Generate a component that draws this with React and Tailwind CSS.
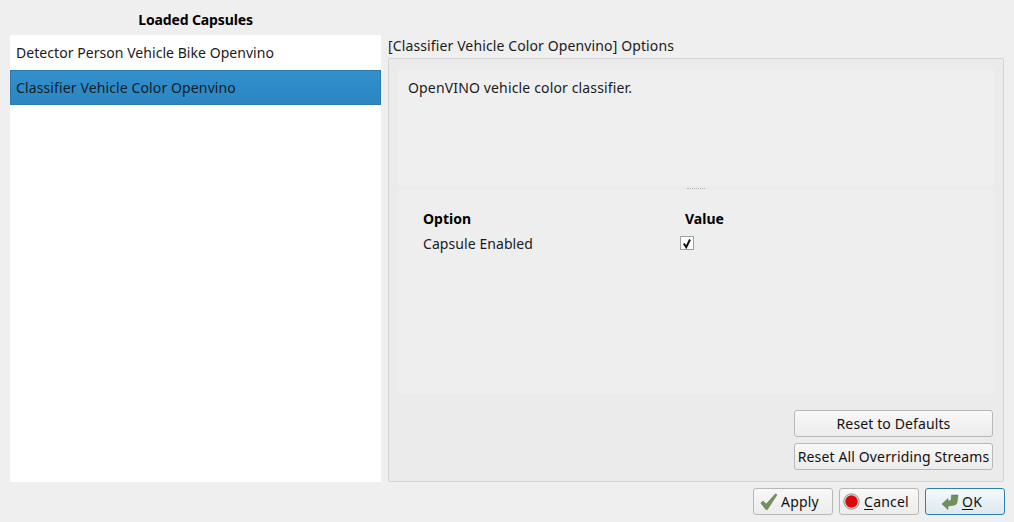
import React from 'react';

const font = { fontFamily: '"Noto Sans", sans-serif' };

const PushButton = ({ children, className = '' }) => (
  <div className={`flex items-center justify-center rounded-[3px] border bg-gradient-to-b text-[14px] leading-none text-[#111] ${className}`}>
    {children}
  </div>
);

const App = () => {
  return (
    <div style={font} className="flex h-[522px] w-[1014px] flex-col overflow-hidden bg-[#efefef] text-[14px] text-[#1a1a1a]">
      <div className="flex h-[482px] gap-[7px] pl-[10px] pr-[10px]">
        <div className="flex w-[371px] flex-col">
          <div className="flex h-[35px] items-center justify-center pt-[5px] text-[14px] font-bold leading-none tracking-[-0.13px] text-black">Loaded Capsules</div>
          <div className="flex-1 bg-white">
            <div className="flex h-[35px] items-center pl-[6px] tracking-[0.05px]">Detector Person Vehicle Bike Openvino</div>
            <div className="flex h-[35px] items-center border border-[#2a7ab0] bg-gradient-to-b from-[#3290cd] to-[#2c86c0] pl-[5px] tracking-[0.12px] text-[#10202c]">Classifier Vehicle Color Openvino</div>
          </div>
        </div>
        <div className="flex w-[616px] flex-col">
          <div className="flex h-[58px] items-end pb-[2px] leading-[20px] tracking-[0.12px]">[Classifier Vehicle Color Openvino] Options</div>
          <div className="flex flex-1 flex-col rounded-[2px] border-[1.5px] border-[#d4d4d4] bg-[#ebebeb] px-[9px] pb-[7px] pt-[10px]">
            <div className="h-[117px] rounded-[2px] bg-[#efefef] px-[10px] pt-[9px] leading-[20px] tracking-[0.15px]">OpenVINO vehicle color classifier.</div>
            <div className="flex h-[4px] items-center justify-center">
              <div className="w-[18px] border-t border-dotted border-[#b4b4b4]"></div>
            </div>
            <div className="h-[204px] rounded-[2px] bg-[#eeeeee] pl-[25px] pt-[19px]">
              <div className="flex h-[20px] items-center font-bold leading-none text-black">
                <div className="w-[262px]">Option</div>
                <div>Value</div>
              </div>
              <div className="mt-[4px] flex h-[20px] items-center leading-none">
                <div className="w-[257px] pt-[2px] tracking-[0.07px]">Capsule Enabled</div>
                <div className="flex h-[14px] w-[14px] items-center justify-center border-[1.5px] border-[#a0a0a0] bg-white">
                  <svg width="10" height="11" viewBox="0 0 10 11">
                    <path d="M1.8 5.5 L4.2 9.2 L8 1.5" fill="none" stroke="#111" strokeWidth="2" />
                  </svg>
                </div>
              </div>
            </div>
            <div className="mt-[16px] flex flex-col items-end gap-[6px] pr-[1px]">
              <PushButton className="h-[27px] w-[199px] border-[#b8b8b8] from-[#f8f8f8] to-[#ececec] tracking-[0.12px]">Reset to Defaults</PushButton>
              <PushButton className="h-[27px] w-[199px] border-[#b8b8b8] from-[#f8f8f8] to-[#ececec] tracking-[0.14px]">Reset All Overriding Streams</PushButton>
            </div>
          </div>
        </div>
      </div>
      <div className="flex flex-1 items-start justify-end gap-[6px] pr-[9px] pt-[6px]">
        <PushButton className="h-[27px] w-[80px] gap-[3px] border-[#b8b8b8] from-[#f8f8f8] to-[#ececec] pr-[7px]">
          <svg width="18" height="18" viewBox="0 0 18 18">
            <path d="M0.8 10 L3 8 L6.2 11 L15.5 0.8 L17 1.8 L7.5 16.5 L5.8 16.5 Z" fill="#71905c" stroke="#5e7a4b" strokeWidth="0.5" />
          </svg>
          <span className="tracking-[0.2px]">Apply</span>
        </PushButton>
        <PushButton className="h-[27px] w-[80px] gap-[4px] border-[#b8b8b8] from-[#f8f8f8] to-[#ececec] pr-[6px]">
          <svg width="17" height="17" viewBox="0 0 17 17">
            <circle cx="8.5" cy="8.5" r="7.7" fill="#e4e4e4" stroke="#8e8e8e" strokeWidth="1" />
            <circle cx="8.5" cy="8.5" r="6.2" fill="#d60a0a" />
          </svg>
          <span className="tracking-[0.2px]"><span className="underline underline-offset-2">C</span>ancel</span>
        </PushButton>
        <PushButton className="h-[27px] w-[80px] gap-[3px] border-[#2f7fae] from-[#f6fafc] to-[#dde8ef] pr-[7px]">
          <svg width="18" height="18" viewBox="0 0 18 18">
            <path d="M1 11 L7 5.5 L7 8 L10 7.5 L10.5 2 L17 2 L16 9.5 Q15.5 12 12.5 12.3 L7 13 L7 16.5 Z" fill="#71905c" stroke="#566e46" strokeWidth="0.5" />
          </svg>
          <span className="tracking-[0.3px]"><span className="underline underline-offset-2">O</span>K</span>
        </PushButton>
      </div>
    </div>
  );
};

export default App;
